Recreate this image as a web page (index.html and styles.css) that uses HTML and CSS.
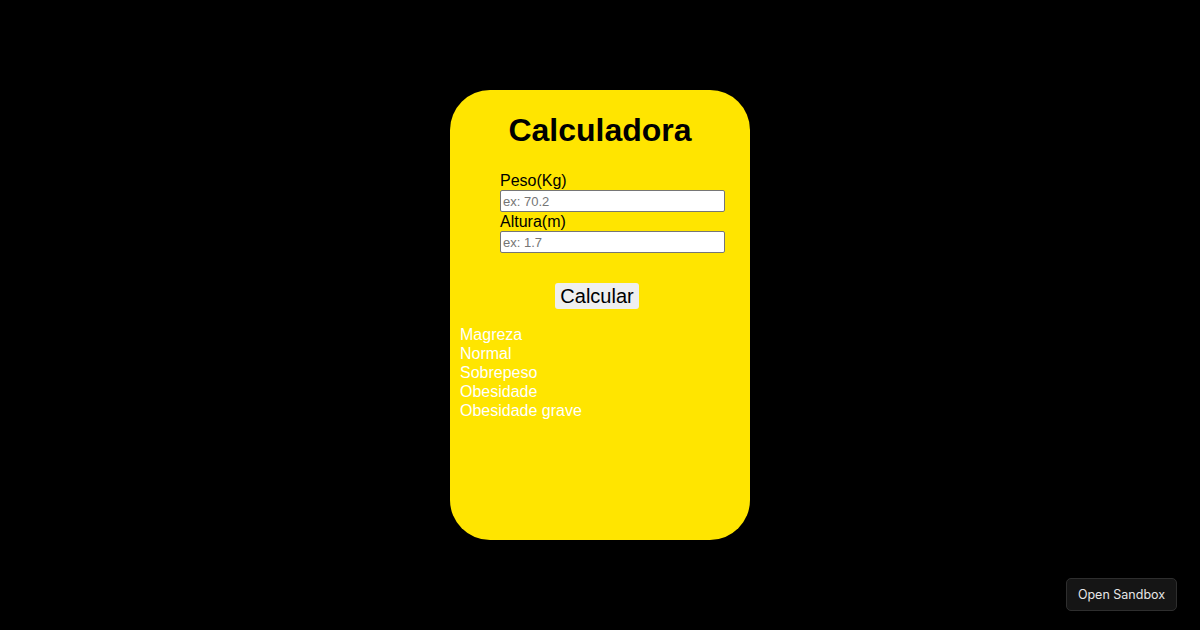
FILE: index.html
```html
<!DOCTYPE html>
<html lang="pt">
<head>
<meta charset="utf-8">
<title>Calculadora</title>
<link rel="stylesheet" href="styles.css">
</head>
<body>
<main class="stage">
  <section class="card">
    <h1 class="title">Calculadora</h1>
    <form class="form">
      <label class="label" for="peso">Peso(Kg)</label>
      <input class="field" id="peso" type="text" placeholder="ex: 70.2">
      <label class="label" for="altura">Altura(m)</label>
      <input class="field" id="altura" type="text" placeholder="ex: 1.7">
    </form>
    <div class="actions">
      <button class="btn" type="button">Calcular</button>
    </div>
    <ul class="results">
      <li>Magreza</li>
      <li>Normal</li>
      <li>Sobrepeso</li>
      <li>Obesidade</li>
      <li>Obesidade grave</li>
    </ul>
  </section>
</main>
<a class="sandbox" href="#">Open Sandbox</a>
</body>
</html>
```

FILE: styles.css
```css
html, body {
  margin: 0;
  padding: 0;
  background: #000;
  height: 100%;
}
body {
  font-family: "Liberation Sans", Arial, sans-serif;
  overflow: hidden;
}
.stage {
  display: flex;
  justify-content: center;
  padding-top: 90px;
}
.card {
  width: 300px;
  height: 450px;
  box-sizing: border-box;
  background: #ffe500;
  border-radius: 40px;
  display: flex;
  flex-direction: column;
}
.title {
  margin: 22px 0 0;
  text-align: center;
  font-size: 32px;
  font-weight: bold;
  line-height: 37px;
  color: #000;
}
.form {
  margin: 23px 0 0 50px;
  display: flex;
  flex-direction: column;
  align-items: flex-start;
}
.label {
  font-size: 16px;
  line-height: 18px;
  color: #000;
}
.field {
  width: 225px;
  height: 22px;
  box-sizing: border-box;
  margin: 0 0 1px;
  padding: 1px 2px;
  border: 1px solid #767676;
  border-radius: 2px;
  background: #fff;
  font-family: "Liberation Sans", Arial, sans-serif;
  font-size: 13px;
}
.field::placeholder {
  color: #757575;
}
.actions {
  display: flex;
  justify-content: center;
  margin-top: 29px;
  padding-right: 6px;
}
.btn {
  width: 84px;
  height: 26px;
  padding: 0;
  border: none;
  border-radius: 3px;
  background: #efefef;
  color: #000;
  font-family: "Liberation Sans", Arial, sans-serif;
  font-size: 20px;
  line-height: 26px;
}
.results {
  list-style: none;
  margin: 16px 0 0;
  padding: 0 0 0 10px;
  color: #fff;
  font-size: 16px;
  line-height: 19px;
}
.sandbox {
  position: absolute;
  right: 23px;
  bottom: 19px;
  width: 111px;
  height: 33px;
  box-sizing: border-box;
  display: flex;
  align-items: center;
  justify-content: center;
  background: #151515;
  border: 1px solid #2e2e2e;
  border-radius: 5px;
  color: #e6e6e6;
  font-family: Inter, "Liberation Sans", sans-serif;
  font-size: 12.5px;
  text-decoration: none;
}
```
